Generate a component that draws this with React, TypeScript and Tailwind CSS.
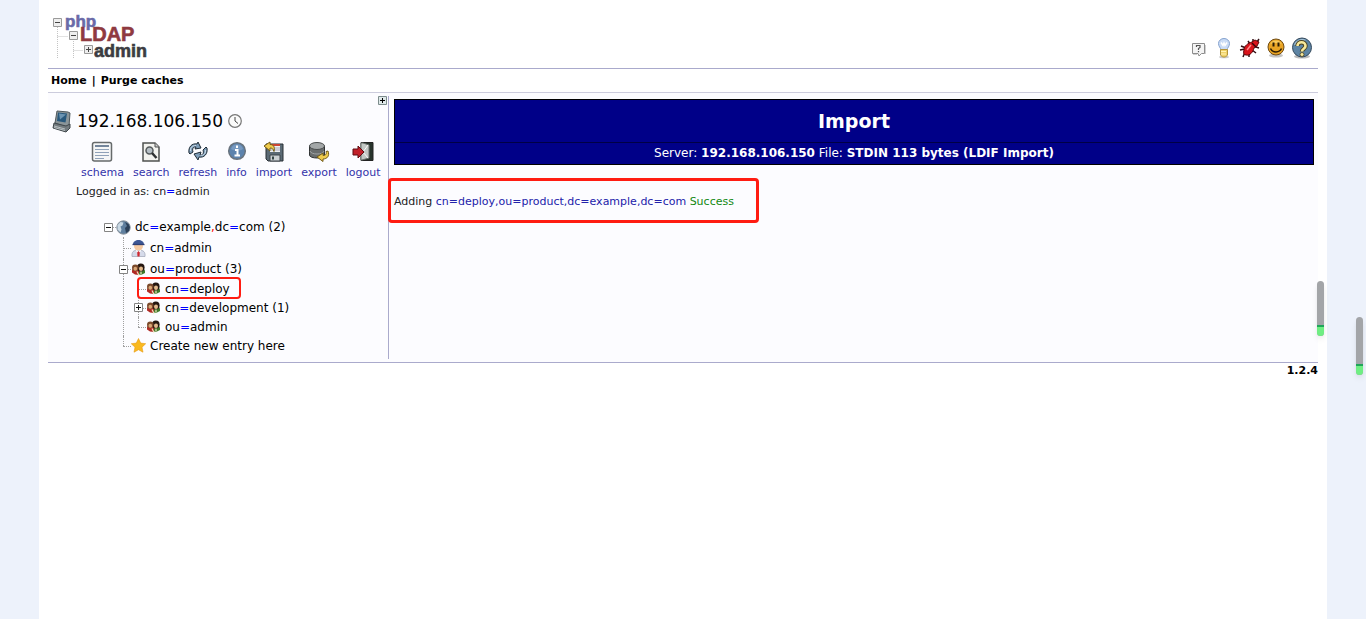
import React from 'react';

type IconProps = { className?: string };

const Logo = () => (
  <svg width="100" height="48" viewBox="0 0 100 48" role="img" aria-label="phpLDAPadmin">
    <g stroke="#c4c4c4" strokeDasharray="1 1" fill="none">
      <path d="M5.500 14V46M5.500 23.500H16M21.500 28V46M21.500 37.500H31" />
    </g>
    <g fontFamily="'Liberation Sans', sans-serif" fontWeight="bold" strokeWidth=".6">
      <text x="13" y="14" fontSize="17" fill="#6a6aa8" stroke="#6a6aa8">php</text>
      <text x="28" y="28" fontSize="20" fill="#8f3a40" stroke="#8f3a40">LDAP</text>
      <text x="42" y="44" fontSize="18" fill="#3c3c42" stroke="#3c3c42">admin</text>
    </g>
    <g fill="#eee" stroke="#9a9a9a">
      <path d="M1.500 5.500h8v8h-8zM17.500 18.500h8v8h-8zM32.500 32.500h8v8h-8z" />
      <path d="M3 9.500h5M19 22.500h5M34 36.500h5M36.500 34v5" stroke="#444" />
    </g>
  </svg>
);

const RequestIcon = () => (
  <svg width="16" height="18" viewBox="0 0 16 18">
    <path d="M2.500 4.500h12v10h-3l-2.500 2.500-1-2.500H2.500z" fill="#f4f4f4" stroke="#8d8d8d" />
    <path d="M3 15.500h4M15.500 6v9" fill="none" stroke="#cfcfcf" />
    <path d="M6.500 8V6.500h3.500v2L8.500 9.500V11M8.500 12v1.300" fill="none" stroke="#555" strokeWidth="1.200" />
  </svg>
);

const BulbIcon = () => (
  <svg width="16" height="22" viewBox="0 0 16 22">
    <ellipse cx="8" cy="20" rx="5" ry="1.300" fill="#ccc" />
    <path d="M8 1.500a5.500 5 0 0 0-5.500 5c0 3 2 4 2.500 6.500h6c.5-2.500 2.500-3.500 2.500-6.500a5.500 5 0 0 0-5.500-5z" fill="#c9dbf5" stroke="#86a3cf" />
    <path d="M5 5.500l2 3L8 6l1 2.500 2-3" fill="none" stroke="#fff" strokeWidth="1.500" />
    <path d="M4.500 12.500h7v5.500l-2 2h-3l-2-2z" fill="#f0d36a" stroke="#b3943c" />
    <path d="M5 14.500h5M5 17h5" stroke="#fff3b5" strokeWidth="1.200" />
  </svg>
);

const BugIcon = () => (
  <svg width="22" height="22" viewBox="0 0 22 22">
    <path d="M2 9l5 2M1 13l5-1M6 15l-2 5M10 16v4M13 13l4 3M14 9l6 2M11 7L9 4M14 5V2M18 5l2-3" fill="none" stroke="#331015" strokeWidth="1.500" />
    <path d="M5 13c0-4 4-7 8-8l3-2 4 2-2 4-3 2c-1 4-4 8-8 7-2 0-3-2-2-5z" fill="#d9141b" stroke="#5d0509" />
    <path d="M8 13l4-5" stroke="#ff8a8a" strokeWidth="1.500" />
    <path d="M13 6l4 4" stroke="#3a0005" strokeWidth="1.500" />
  </svg>
);

const SmileIcon = () => (
  <svg width="20" height="22" viewBox="0 0 20 22">
    <ellipse cx="10" cy="18.500" rx="7" ry="2" fill="#c4c4c4" />
    <circle cx="10" cy="10" r="8" fill="#e9a424" stroke="#6e4a14" />
    <path d="M4 7.500a6.500 6.500 0 0 1 12 0c-3-2-9-2-12 0z" fill="#f7c95b" />
    <path d="M7.500 5.500v4M12.500 5.500v4" stroke="#2c1c05" strokeWidth="2" />
    <path d="M4.500 11.500c2 4.500 9 4.500 11 0" fill="none" stroke="#2c1c05" strokeWidth="1.500" />
  </svg>
);

const HelpIcon = () => (
  <svg width="22" height="22" viewBox="0 0 22 22">
    <ellipse cx="11" cy="19.500" rx="8" ry="2" fill="#bbb" />
    <circle cx="11" cy="10.500" r="9.500" fill="#5d84a4" stroke="#34495c" />
    <path d="M3 8a8.500 8.500 0 0 1 12-5c-4 1-5 5-12 5z" fill="#a9c5da" />
    <path d="M6.500 9c0-5 8-5 8 0 0 3-3.500 2.500-3.500 5.500" fill="none" stroke="#4c4420" strokeWidth="4.500" />
    <path d="M6.500 9c0-5 8-5 8 0 0 3-3.500 2.500-3.500 5.500" fill="none" stroke="#f8e99b" strokeWidth="2.600" />
    <circle cx="11" cy="17.500" r="2" fill="#f8e99b" stroke="#4c4420" strokeWidth=".8" />
  </svg>
);

const ServerIcon = () => (
  <svg width="22" height="24" viewBox="0 0 22 24">
    <path d="M6 2l11 1 2 1-1 13-3 1L4 14z" fill="#8b9599" stroke="#4f585c" />
    <path d="M7 3.500l9 1-1.500 9L6 12z" fill="#28587c" />
    <path d="M8 4.500l7 1-6 5z" fill="#6c94b2" />
    <path d="M3 14l12 3 4-2v4l-4 4-13-4z" fill="#727a7e" stroke="#3f474b" />
    <path d="M3 17l11 3M3 18.500l11 3" stroke="#b8bfc2" />
  </svg>
);

const ClockIcon = () => (
  <svg width="16" height="16" viewBox="0 0 16 16">
    <circle cx="8" cy="8" r="6.300" fill="#fafafa" stroke="#777" strokeWidth="1.200" />
    <path d="M8 4v4l3 2.500" fill="none" stroke="#444" />
  </svg>
);

const SchemaIcon = () => (
  <svg width="22" height="22" viewBox="0 0 22 22">
    <rect x="1.500" y="1.500" width="19" height="18.500" rx="2" fill="#f5f6f6" stroke="#666a6b" strokeWidth="1.500" />
    <path d="M4 5h14" stroke="#73859b" strokeWidth="2" />
    <path d="M4 8.500h14M4 11.500h14M4 14.500h14M4 17.500h9" stroke="#8fa1b8" />
  </svg>
);

const SearchIcon = () => (
  <svg width="20" height="22" viewBox="0 0 20 22">
    <path d="M2 2h12l4 4v14H2z" fill="#f3f3ef" stroke="#4f5150" strokeWidth="1.500" />
    <path d="M14 2v4h4" fill="#ccc" stroke="#4f5150" />
    <circle cx="8.500" cy="9.500" r="3.500" fill="#b5bec4" stroke="#555a5c" strokeWidth="1.500" />
    <path d="M11 12l4.500 5" stroke="#2e3132" strokeWidth="2.500" />
  </svg>
);

const RefreshIcon = () => (
  <svg width="22" height="20" viewBox="0 0 22 20">
    <g strokeLinejoin="round" stroke="#202d38">
      <path d="M2 12C1 6 5 2 10 3l1-2 3 6-6 1 1-2c-3-.5-4 2-3 5l-3 2z" fill="#7e9db8" />
      <path d="M20 7c1 6-3 10-8 9l-1 3-4-6 7-2-1 3c3 .5 4-2 3-5l3-3z" fill="#7e9db8" />
    </g>
    <path d="M3.500 10C3 7 5 4.500 9 4.500M18.500 9c.5 3-1.500 5.500-5 5.500" fill="none" stroke="#c9dae8" />
  </svg>
);

const InfoIcon = () => (
  <svg width="20" height="20" viewBox="0 0 20 20">
    <circle cx="10" cy="10" r="8.300" fill="#5d83ad" stroke="#69737d" strokeWidth="1.500" />
    <path d="M4 8a6.300 6.300 0 0 1 12 0c-3 2-9 2-12 0z" fill="#7799c0" />
    <path d="M10 4.500v2.500M8 9h2.500v5.500M7.500 14.500h5.500" fill="none" stroke="#fff" strokeWidth="2" />
  </svg>
);

const ImportIcon = () => (
  <svg width="22" height="22" viewBox="0 0 22 22">
    <path d="M4 3h16v17H5l-2-2V3z" fill="#5b6a75" stroke="#292f34" />
    <path d="M7 3h10v8H7z" fill="#eef1f3" />
    <path d="M7 3h10v2H7z" fill="#cc4534" />
    <path d="M8 7h9M8 9h9" stroke="#aab" />
    <path d="M7 14h10v6H7z" fill="#cbd0d3" stroke="#3c444a" />
    <path d="M9 15.500h2v3H9z" fill="#344" />
    <path d="M1 5l6-4v2.500c4 0 5 3 4 7-1-3-2-3.500-4-3.500V10z" fill="#efcb4d" stroke="#725b17" />
  </svg>
);

const ExportIcon = () => (
  <svg width="22" height="22" viewBox="0 0 22 22">
    <path d="M1.500 5v9c0 4 15 4 15 0V5z" fill="#686c6d" stroke="#303334" />
    <ellipse cx="9" cy="5" rx="7.500" ry="3.500" fill="#a3a7a8" stroke="#4a4d4e" />
    <path d="M2 10c1 4 13 4 14 0" fill="none" stroke="#9fa3a4" />
    <path d="M20 10c2 5-1 8-5 8v2.500L9 16l6-4v2.500c2 0 4-1 3-4z" fill="#efcb4d" stroke="#725b17" />
  </svg>
);

const LogoutIcon = () => (
  <svg width="22" height="22" viewBox="0 0 22 22">
    <path d="M9 1.500h12v18H9z" fill="#27332c" stroke="#222" />
    <path d="M9 2h2l6 2v13l-7 2H9z" fill="#c3c8c5" stroke="#6a706c" />
    <path d="M16 4l-5 7 5 6" fill="none" stroke="#f9f9f9" />
    <path d="M1 8h5V5l6 6-6 6v-3H1z" fill="#c2202a" stroke="#5e0b10" />
  </svg>
);

const GlobeIcon = () => (
  <svg width="15" height="15" viewBox="0 0 15 15">
    <circle cx="7.500" cy="7.500" r="6.700" fill="#5f7f9f" stroke="#8a929a" />
    <path d="M1.500 5l3-3 3 .5-1 3-2 1 1 3-1 3-3-3z" fill="#c9d8e4" />
    <path d="M9 2l3.500 2 1.500 3-1 4-3 2-1-5 2-2z" fill="#2c4059" />
  </svg>
);

const UserIcon = () => (
  <svg width="15" height="18" viewBox="0 0 15 18">
    <path d="M1 17.500c-.5-4 1-6.500 6.500-6.500s7 2.500 6.500 6.500z" fill="#d5daea" stroke="#9da3b5" strokeWidth=".7" />
    <circle cx="7.500" cy="7" r="4.500" fill="#f5c9a2" />
    <path d="M2 5.500c0-6 11-6 11 0l-2-.3H4z" fill="#3e5795" />
    <path d="M1.500 5.500h12" stroke="#303f73" strokeWidth="1.300" />
    <path d="M5 11.500l2.500 1.500 2.500-1.500" fill="none" stroke="#fff" strokeWidth="1.200" />
    <path d="M7.500 12l1.300 1.500-.3 4h-2l-.3-4z" fill="#d02930" />
  </svg>
);

const GroupIcon = () => (
  <svg width="15" height="15" viewBox="0 0 15 15">
    <path d="M6 9c1-3 8-3 8 0v2l-4 2-4-1z" fill="#3f7a2a" />
    <path d="M1 8.500c0-3 6-3 7 0v4.500l-4-.5-3-2z" fill="#b02a24" />
    <ellipse cx="9.800" cy="5.500" rx="3.800" ry="4" fill="#241610" />
    <ellipse cx="4.300" cy="5.800" rx="3.300" ry="3.300" fill="#7a4a2c" />
    <ellipse cx="10" cy="6.800" rx="2" ry="2.300" fill="#e3b98c" />
    <ellipse cx="4.300" cy="6.800" rx="1.800" ry="2" fill="#d9a676" />
    <path d="M6 9.500l2 4M10 9.500v3" stroke="#efe2bd" strokeWidth="1.200" />
  </svg>
);

const StarIcon = () => (
  <svg width="15" height="15" viewBox="0 0 15 15">
    <path d="M7.500.5l2.200 4.600 5 .6-3.700 3.500 1 5-4.500-2.500L3 14.200l1-5L.3 5.700l5-.6z" fill="#f9b91f" stroke="#e79b14" strokeWidth=".6" />
  </svg>
);

const Toggle = ({ plus = false }: { plus?: boolean }) => (
  <button aria-label={plus ? 'Expand' : 'Collapse'} className="relative z-10 block bg-[#fcfcff]">
    <svg width="9" height="9" viewBox="0 0 9 9">
      <path d="M.5.500h8v8h-8z" fill="#fff" stroke="#848484" />
      <path d={plus ? 'M2 4.500h5M4.500 2v5' : 'M2 4.500h5'} stroke="#111" />
    </svg>
  </button>
);

const TOOLS = [
  { label: 'schema', icon: <SchemaIcon /> },
  { label: 'search', icon: <SearchIcon /> },
  { label: 'refresh', icon: <RefreshIcon /> },
  { label: 'info', icon: <InfoIcon /> },
  { label: 'import', icon: <ImportIcon /> },
  { label: 'export', icon: <ExportIcon /> },
  { label: 'logout', icon: <LogoutIcon /> },
];

const HEADER_LINKS = [
  { label: 'Request feature', icon: <RequestIcon /> },
  { label: 'Hints', icon: <BulbIcon /> },
  { label: 'Report a bug', icon: <BugIcon /> },
  { label: 'Donate', icon: <SmileIcon /> },
  { label: 'Help', icon: <HelpIcon /> },
];

type Guide = 'none' | 'line' | 'tee' | 'end' | 'minus' | 'minus-root' | 'plus';

interface TreeRow {
  guides: Guide[];
  icon: React.ReactNode;
  name: string;
  count?: number;
  height: string;
  marked?: boolean;
}

const TREE: TreeRow[] = [
  { guides: ['minus-root'], icon: <GlobeIcon />, name: 'dc=example,dc=com', count: 2, height: 'h-5' },
  { guides: ['none', 'tee'], icon: <UserIcon />, name: 'cn=admin', height: 'h-[22px]' },
  { guides: ['none', 'minus'], icon: <GroupIcon />, name: 'ou=product', count: 3, height: 'h-5' },
  { guides: ['none', 'line', 'tee'], icon: <GroupIcon />, name: 'cn=deploy', height: 'h-[19px]', marked: true },
  { guides: ['none', 'line', 'plus'], icon: <GroupIcon />, name: 'cn=development', count: 1, height: 'h-[19px]' },
  { guides: ['none', 'line', 'end'], icon: <GroupIcon />, name: 'ou=admin', height: 'h-[19px]' },
  { guides: ['none', 'end'], icon: <StarIcon />, name: 'Create new entry here', height: 'h-[19px]' },
];

const GuideCell = ({ kind }: { kind: Guide }) => {
  const vertical = kind === 'line' || kind === 'tee' || kind === 'minus' || kind === 'plus';
  const horizontal = kind !== 'none' && kind !== 'line';
  return (
    <span className="relative flex h-full w-[15px] shrink-0 items-center justify-center">
      {vertical && <span className="absolute inset-y-0 left-[7px] border-l border-dotted border-[#a0a0a0]" />}
      {kind === 'end' && <span className="absolute top-0 left-[7px] h-1/2 border-l border-dotted border-[#a0a0a0]" />}
      {horizontal && <span className="absolute top-1/2 right-0 left-[7px] border-t border-dotted border-[#a0a0a0]" />}
      {(kind === 'minus' || kind === 'minus-root') && <Toggle />}
      {kind === 'plus' && <Toggle plus />}
    </span>
  );
};

// Separators inside a DN are coloured: "=" blue, "," red
const Dn = ({ value }: { value: string }) => (
  <>
    {value.split(/([=,])/).map((part, i) =>
      part === '=' ? <span key={i} className="text-[#0000ff]">=</span>
        : part === ',' ? <span key={i} className="text-[#ff0000]">,</span>
          : part
    )}
  </>
);

const ScrollThumb = ({ className }: IconProps) => (
  <div className={`absolute flex flex-col justify-end overflow-hidden rounded-full bg-[#a3a5a8] shadow-md ${className}`}>
    <div className="h-[11px] border-t-2 border-[#1fa65a] bg-[#6fee83]" />
  </div>
);

export default function App() {
  return (
    <div className="relative min-h-screen bg-[#edf2fb] px-[39px] font-['DejaVu_Sans',sans-serif] text-[11px] leading-4 text-[#222]">
      <div className="min-h-screen bg-white px-[9px]">
        <header className="flex h-[69px] items-end justify-between border-b border-[#aaaacc] pr-[3px] pl-1">
          <a href="#" className="mb-[7px]"><Logo /></a>
          <nav className="mb-[9px] flex items-center">
            {HEADER_LINKS.map((link) => (
              <a key={link.label} href="#" aria-label={link.label} className="flex w-[26px] justify-center">{link.icon}</a>
            ))}
          </nav>
        </header>

        <nav className="flex h-6 items-center gap-[5px] border-b border-[#ccccdd] px-[3px] font-bold text-black">
          <a href="#">Home</a>
          <span>|</span>
          <a href="#">Purge caches</a>
        </nav>

        <div className="flex min-h-[270px] border-b border-[#aaaacc] bg-[#fcfcff] pt-[3px]">
          <aside className="relative mb-[3px] w-[341px] shrink-0 border-r border-[#aaaacc] pt-[13px]">
            <button aria-label="Expand panel" className="absolute top-0 right-[1px]">
              <svg width="9" height="9" viewBox="0 0 9 9">
                <path d="M.5.500h8v8h-8z" fill="#dfe9e9" stroke="#7c8c8c" />
                <path d="M2 4.500h5M4.500 2v5" stroke="#000" />
              </svg>
            </button>

            <h2 className="flex h-6 items-center gap-1 pl-[3px] text-[17px] text-black">
              <ServerIcon />
              <span>192.168.106.150</span>
              <ClockIcon />
            </h2>

            <div className="flex gap-[9px] pt-[7px] pl-[33px] text-[#3333aa]">
              {TOOLS.map((tool) => (
                <a key={tool.label} href="#" className="flex flex-col items-center">
                  <span className="flex h-[25px] items-start pt-px">{tool.icon}</span>
                  <span>{tool.label}</span>
                </a>
              ))}
            </div>
            <p className="pt-[3px] pl-7">Logged in as: <Dn value="cn=admin" /></p>

            <ul className="pt-[17px] pl-[53px] text-[12px] text-black">
              {TREE.map((row) => (
                <li key={row.name} className={`relative flex items-center ${row.height}`}>
                  {row.guides.map((kind, i) => <GuideCell key={i} kind={kind} />)}
                  <span className="flex w-[15px] shrink-0 justify-center">{row.icon}</span>
                  <a href="#" className="pl-1 whitespace-nowrap">
                    <Dn value={row.name} />
                    {row.count !== undefined && ` (${row.count})`}
                  </a>
                  {row.marked && (
                    <span className="pointer-events-none absolute -top-[2px] left-9 h-[22px] w-[104px] rounded-sm border-2 border-[#ff1c12]" />
                  )}
                </li>
              ))}
            </ul>
          </aside>

          <main className="min-w-0 flex-1 pt-[3px] pr-1 pl-[5px]">
            <div className="border border-black bg-[#000088] text-center text-white">
              <h1 className="flex h-[43px] items-center justify-center border-b border-[#000044] text-[19px] font-bold">Import</h1>
              <p className="h-[21px] text-[12px] leading-[21px]">
                Server: <b>192.168.106.150</b> File: <b>STDIN 113 bytes (LDIF Import)</b>
              </p>
            </div>
            <p className="relative mt-[29px]">
              Adding <a href="#" className="text-[#2222aa]">cn=deploy,ou=product,dc=example,dc=com</a>{' '}
              <span className="text-[#118811]">Success</span>
              <span className="pointer-events-none absolute -top-4 -left-[6px] h-[45px] w-[371px] rounded-sm border-[3px] border-[#ff1c12]" />
            </p>
          </main>
        </div>

        <footer className="text-right font-bold text-black">1.2.4</footer>
      </div>

      <ScrollThumb className="top-[281px] right-[42px] h-[55px] w-[7px]" />
      <ScrollThumb className="top-[317px] right-[3px] h-[58px] w-[7px]" />
    </div>
  );
}
